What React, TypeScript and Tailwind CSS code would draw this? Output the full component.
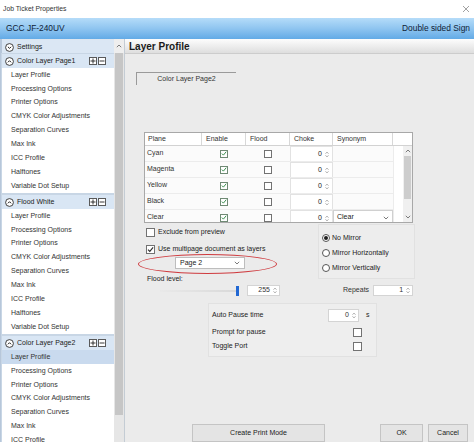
import * as React from "react";

const sidebarItems = [
  "Layer Profile",
  "Processing Options",
  "Printer Options",
  "CMYK Color Adjustments",
  "Separation Curves",
  "Max Ink",
  "ICC Profile",
  "Halftones",
  "Variable Dot Setup",
];

const planes = ["Cyan", "Magenta", "Yellow", "Black", "Clear"];

function CircleToggle({ open }: { open: boolean }) {
  return (
    <svg width="9" height="9" viewBox="0 0 9 9" className="shrink-0">
      <circle cx="4.5" cy="4.5" r="3.9" fill="white" stroke="#2b2b2b" strokeWidth="0.9" />
      <path
        d={open ? "M2.9 5.3 4.5 3.7 6.1 5.3" : "M2.9 3.8 4.5 5.4 6.1 3.8"}
        fill="none"
        stroke="#1f1f1f"
        strokeWidth="1"
      />
    </svg>
  );
}

function PlusMinus() {
  return (
    <div className="ml-auto mr-[8px] flex gap-[1px]">
      <span className="flex size-[8px] items-center justify-center border border-[#5a5a5a] bg-white">
        <svg width="6" height="6" viewBox="0 0 6 6">
          <path d="M3 0.5V5.5M0.5 3H5.5" stroke="#222" strokeWidth="0.9" />
        </svg>
      </span>
      <span className="flex size-[8px] items-center justify-center border border-[#5a5a5a] bg-white">
        <svg width="6" height="6" viewBox="0 0 6 6">
          <path d="M0.5 3H5.5" stroke="#222" strokeWidth="0.9" />
        </svg>
      </span>
    </div>
  );
}

function Group({ title, selected }: { title: string; selected?: string }) {
  return (
    <div className="flex flex-col bg-white ring-1 ring-[#c8d6e5]">
      <div className="flex h-[14px] items-center gap-[3px] bg-[#d9e6f4] pl-[3px] text-[7px] text-[#222]">
        <CircleToggle open />
        <span>{title}</span>
        <PlusMinus />
      </div>
      {sidebarItems.map((item) => (
        <div
          key={item}
          className={`flex h-[13.9px] items-center pl-[9px] text-[7px] text-[#333] ${
            item === selected ? "bg-[#c9daee]" : ""
          }`}
        >
          {item}
        </div>
      ))}
    </div>
  );
}

function SmallChevron({ up }: { up?: boolean }) {
  return (
    <svg width="6" height="4" viewBox="0 0 6 4">
      <path d={up ? "M0.8 3.2 3 1 5.2 3.2" : "M0.8 0.8 3 3 5.2 0.8"} fill="none" stroke="#6d6d6d" strokeWidth="0.9" />
    </svg>
  );
}

function SpinArrows() {
  return (
    <svg width="4" height="7" viewBox="0 0 4 7" className="shrink-0">
      <path d="M0.6 2.6 2 1.2 3.4 2.6M0.6 4.4 2 5.8 3.4 4.4" fill="none" stroke="#7a7a7a" strokeWidth="0.7" />
    </svg>
  );
}

function Spin({ value, className }: { value: string; className: string }) {
  return (
    <div
      className={`flex items-center justify-end gap-[3px] border border-[#d4d4d4] bg-white pr-[2px] text-[7px] text-[#333] ${className}`}
    >
      <span>{value}</span>
      <SpinArrows />
    </div>
  );
}

function CheckBox({ checked, green, className }: { checked?: boolean; green?: boolean; className: string }) {
  return (
    <span
      className={`flex shrink-0 items-center justify-center border bg-white ${
        green ? "border-[#6f8a74]" : "border-[#727272]"
      } ${className}`}
    >
      {checked ? (
        <svg width="7" height="7" viewBox="0 0 7 7">
          <path
            d="M1 3.6 2.8 5.4 6.1 1.4"
            fill="none"
            stroke={green ? "#2f8a45" : "#2a2a2a"}
            strokeWidth="1.1"
          />
        </svg>
      ) : null}
    </span>
  );
}

function Radio({ checked }: { checked?: boolean }) {
  return (
    <span className="flex size-[8px] shrink-0 items-center justify-center rounded-full border border-[#555] bg-white">
      {checked ? <span className="size-[4px] rounded-full bg-[#1e1e1e]" /> : null}
    </span>
  );
}

export default function App() {
  return (
    <div className="flex h-[442px] w-[474px] flex-col overflow-hidden bg-white font-['Liberation_Sans',Arial,sans-serif]">
      {/* window title */}
      <div className="flex h-[18px] shrink-0 items-center justify-between bg-white pl-[3px] pr-[4px]">
        <span className="text-[6.8px] text-[#333]">Job Ticket Properties</span>
        <svg width="8" height="8" viewBox="0 0 8 8">
          <path d="M1 1 7 7M7 1 1 7" stroke="#8a8a8a" strokeWidth="0.8" />
        </svg>
      </div>

      {/* printer bar */}
      <div className="flex h-[21px] shrink-0 items-center justify-between bg-linear-to-b from-[#b5dcf9] via-[#8fc5f0] to-[#62aae6] pl-[6px] pr-[4px] text-[8.4px] text-[#0f2236]">
        <span>GCC JF-240UV</span>
        <span>Double sided Sign</span>
      </div>

      <div className="flex min-h-0 flex-1">
        {/* sidebar */}
        <aside className="flex w-[124px] shrink-0 border-l-[2px] border-[#b7c7da] bg-[#dde6f0]">
          <div className="flex w-[112px] flex-col gap-[2px] pt-[1px]">
            <div className="flex h-[14px] shrink-0 items-center gap-[3px] bg-[#dbe7f4] pl-[3px] text-[7px] text-[#222]">
              <CircleToggle open={false} />
              <span>Settings</span>
            </div>
            <div className="-mt-[2px]">
              <Group title="Color Layer Page1" />
            </div>
            <Group title="Flood White" />
            <Group title="Color Layer Page2" selected="Layer Profile" />
          </div>
          <div className="flex w-[10px] flex-col items-center bg-[#e6e6e6]">
            <div className="flex h-[14px] w-full items-center justify-center bg-[#eeeeee]">
              <SmallChevron up />
            </div>
            <div className="h-[362px] w-[8px] bg-[#c6c6c6]" />
          </div>
        </aside>

        {/* main panel */}
        <main className="flex min-w-0 flex-1 flex-col border-l border-[#c4ccd4] bg-[#ebebeb] text-[7px] text-[#222]">
          <div className="flex h-[15px] shrink-0 items-center border-b border-[#cccccc] bg-linear-to-b from-[#fdfdfd] to-[#dedede] pl-[4px] text-[10px] font-bold text-[#1a1a1a]">
            Layer Profile
          </div>

          <div className="ml-[11px] mt-[18px] flex h-[13px] w-[100px] shrink-0 items-center justify-center border-l border-t border-[#9a9a9a] text-[#333]">
            Color Layer Page2
          </div>

          {/* plane table */}
          <div className="ml-[19px] mt-[47px] flex h-[91px] w-[269px] shrink-0 flex-col overflow-hidden border border-[#a8a8a8] bg-white">
            <div className="flex h-[13px] shrink-0 border-b border-[#d2d2d2] text-[#333]">
              <div className="flex w-[57px] items-center border-r border-[#d8d8d8] pl-[3px]">Plane</div>
              <div className="flex w-[44px] items-center border-r border-[#d8d8d8] pl-[4px]">Enable</div>
              <div className="flex w-[44px] items-center border-r border-[#d8d8d8] pl-[4px]">Flood</div>
              <div className="flex w-[43px] items-center border-r border-[#d8d8d8] pl-[4px]">Choke</div>
              <div className="flex w-[60px] items-center border-r border-[#d8d8d8] pl-[4px]">Synonym</div>
              <div className="flex-1" />
            </div>
            <div className="flex min-h-0 flex-1">
              <div className="flex w-[248px] flex-col">
                {planes.map((p) => (
                  <div key={p} className="flex h-[16px] shrink-0 border-b border-[#ececec] bg-[#fbfbfb]">
                    <div className="flex w-[57px] items-center pl-[2px] text-[#333]">{p}</div>
                    <div className="flex w-[44px] items-center justify-center">
                      <CheckBox checked green className="size-[8px]" />
                    </div>
                    <div className="flex w-[44px] items-center justify-center">
                      <CheckBox className="size-[8px]" />
                    </div>
                    <div className="flex w-[43px] items-center justify-end gap-[3px] border-x border-t border-[#e2e2e2] bg-white pr-[3px]">
                      <span>0</span>
                      <SpinArrows />
                    </div>
                    <div className="flex w-[60px] items-center">
                      {p === "Clear" ? (
                        <div className="flex h-full w-full items-center justify-between border border-[#d0d0d0] bg-white pl-[3px] pr-[3px]">
                          <span>Clear</span>
                          <SmallChevron />
                        </div>
                      ) : null}
                    </div>
                  </div>
                ))}
              </div>
              <div className="w-[10px] border-l border-[#ececec] bg-white" />
              <div className="flex w-[9px] flex-col items-center bg-[#f0f0f0]">
                <div className="flex h-[10px] items-center">
                  <SmallChevron up />
                </div>
                <div className="h-[43px] w-[7px] bg-[#cdcdcd]" />
                <div className="mt-auto flex h-[10px] items-center">
                  <SmallChevron />
                </div>
              </div>
            </div>
          </div>

          {/* options + mirror */}
          <div className="flex shrink-0">
            <div className="ml-[21px] flex w-[172px] flex-col">
              <div className="mt-[4px] flex h-[10px] items-center gap-[3px]">
                <CheckBox className="size-[9px]" />
                <span>Exclude from preview</span>
              </div>
              <div className="mt-[7px] flex h-[10px] items-center gap-[3px]">
                <CheckBox checked className="size-[9px]" />
                <span>Use multipage document as layers</span>
              </div>
              <div className="relative ml-[29px] mt-[3px] h-[12px] w-[70px]">
                <div className="flex h-full w-full items-center justify-between border border-[#bdbdbd] bg-white pl-[4px] pr-[4px]">
                  <span>Page 2</span>
                  <SmallChevron />
                </div>
                <div className="pointer-events-none absolute -left-[37px] -top-[3px] h-[20px] w-[139px] rounded-[50%] border-[1.5px] border-[#cf3b3f]" />
              </div>
            </div>
            <div className="-mb-[2px] mt-[1px] flex h-[55px] w-[97px] flex-col gap-[5px] border border-[#e1e1e1] bg-[#ededed] pl-[3px] pt-[8px]">
              <div className="flex h-[10px] items-center gap-[2px]">
                <Radio checked />
                <span>No Mirror</span>
              </div>
              <div className="flex h-[10px] items-center gap-[2px]">
                <Radio />
                <span>Mirror Horizontally</span>
              </div>
              <div className="flex h-[10px] items-center gap-[2px]">
                <Radio />
                <span>Mirror Vertically</span>
              </div>
            </div>
          </div>

          <div className="ml-[22px] -mt-[2px] flex h-[8px] shrink-0 items-center">Flood level:</div>

          {/* flood slider + repeats */}
          <div className="mt-[2px] flex h-[11px] shrink-0 items-center">
            <div className="ml-[35px] h-[2px] w-[76px] bg-linear-to-r from-[#e9e9e9] to-[#d9d9d9]" />
            <div className="h-[10px] w-[3px] bg-[#2268d3]" />
            <Spin value="255" className="ml-[8px] h-[11px] w-[33px]" />
            <span className="ml-[63px] text-[#333]">Repeats</span>
            <Spin value="1" className="ml-[4px] h-[11px] w-[40px]" />
          </div>

          {/* pause group */}
          <div className="ml-[83px] mt-[7px] flex h-[54px] w-[169px] shrink-0 flex-col border border-[#e1e1e1] bg-[#eeeeee] pl-[3px] pt-[5px]">
            <div className="flex h-[13px] items-center">
              <span className="w-[116px]">Auto Pause time</span>
              <Spin value="0" className="h-[13px] w-[31px]" />
              <span className="ml-[7px]">s</span>
            </div>
            <div className="mt-[5px] flex h-[10px] items-center">
              <span className="w-[116px]">Prompt for pause</span>
              <CheckBox className="ml-[25px] size-[9px]" />
            </div>
            <div className="mt-[4px] flex h-[10px] items-center">
              <span className="w-[116px]">Toggle Port</span>
              <CheckBox className="ml-[25px] size-[9px]" />
            </div>
          </div>

          {/* buttons */}
          <div className="mt-[67px] flex h-[18px] shrink-0 text-[#222]">
            <button className="ml-[67px] flex w-[133px] items-center justify-center border border-[#c4c4c4] bg-[#e4e4e4]">
              Create Print Mode
            </button>
            <button className="ml-[55px] flex w-[43px] items-center justify-center border border-[#c4c4c4] bg-[#e4e4e4]">
              OK
            </button>
            <button className="ml-[5px] flex w-[40px] items-center justify-center border border-[#c4c4c4] bg-[#e4e4e4]">
              Cancel
            </button>
          </div>
        </main>
      </div>
    </div>
  );
}
